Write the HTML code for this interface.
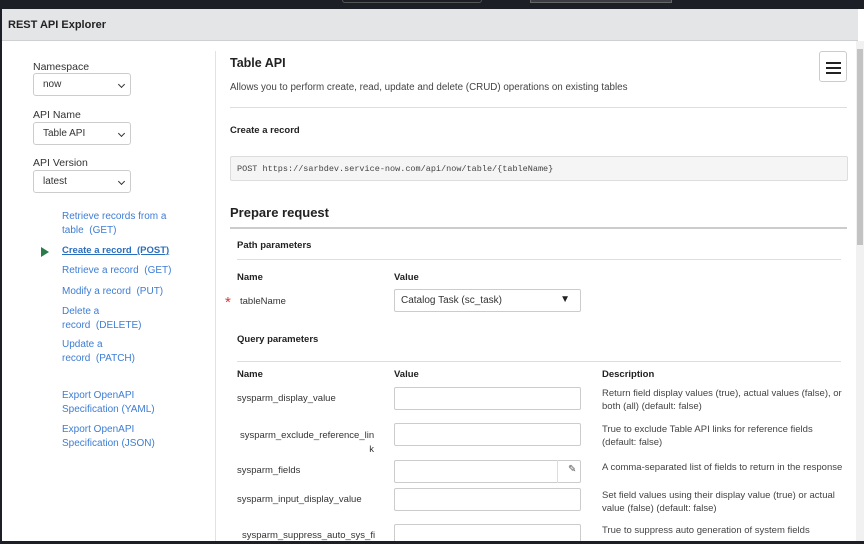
<!DOCTYPE html>
<html><head><style>
*{margin:0;padding:0;box-sizing:border-box}
body{width:864px;height:544px;overflow:hidden;background:#1c1f26;font-family:"Liberation Sans",sans-serif;position:relative;color:#333}
.a{position:absolute}
.win{left:2px;top:9px;width:862px;height:532px;background:#fff;overflow:hidden}
.hdr{left:0;top:0;width:856px;height:32px;background:#e4e5e7;border-bottom:1px solid #cfd0d2;font-size:11px;font-weight:bold;color:#222;padding:10px 0 0 6px}
.lbl{font-size:10.5px;color:#333}
.sel{width:98px;height:23px;border:1px solid #ccc;border-radius:3px;font-size:10px;padding:5px 0 0 9px;color:#333}
.sel:after{content:"";position:absolute;right:6px;top:8px;width:4px;height:4px;border-right:1.5px solid #333;border-bottom:1.5px solid #333;transform:rotate(45deg)}
.lk{font-size:10px;color:#3d7dd4;line-height:13.5px}
.b{font-weight:bold;color:#222}
.t{font-size:9.5px;color:#333}
.inp{width:187px;height:23px;border:1px solid #ccc;border-radius:2px;background:#fff}
.d{font-size:9.5px;color:#444;line-height:13px}
.hr{height:1px;background:#ddd}
</style></head><body>
<div class="a" style="left:342px;top:0;width:140px;height:3px;border:1px solid #555;border-top:none;border-radius:0 0 4px 4px"></div>
<div class="a" style="left:530px;top:0;width:142px;height:3px;background:#3a3d46;border:1px solid #666;border-top:none"></div>
<div class="a win">
<div class="a hdr">REST API Explorer</div>
<div class="a" style="left:854px;top:32px;width:8px;height:500px;background:#f1f1f1"></div>
<div class="a" style="left:855px;top:40px;width:6px;height:196px;background:#c2c2c2"></div>
<div class="a" style="left:213px;top:42px;width:1px;height:490px;background:#e2e2e2"></div>

<div class="a lbl" style="left:31px;top:52px">Namespace</div>
<div class="a sel" style="left:31px;top:64px">now</div>
<div class="a lbl" style="left:31px;top:100px">API Name</div>
<div class="a sel" style="left:31px;top:113px">Table API</div>
<div class="a lbl" style="left:31px;top:148px">API Version</div>
<div class="a sel" style="left:31px;top:161px">latest</div>

<div class="a lk" style="left:60px;top:201px">Retrieve records from a<br>table&nbsp;&nbsp;(GET)</div>
<div class="a" style="left:39px;top:238px;width:0;height:0;border-left:8px solid #2b7a4b;border-top:5px solid transparent;border-bottom:5px solid transparent"></div>
<div class="a lk" style="left:60px;top:235px;color:#2a6ebe;text-decoration:underline;font-weight:bold;font-size:9.5px">Create a record&nbsp;&nbsp;(POST)</div>
<div class="a lk" style="left:60px;top:255px">Retrieve a record&nbsp;&nbsp;(GET)</div>
<div class="a lk" style="left:60px;top:276px">Modify a record&nbsp;&nbsp;(PUT)</div>
<div class="a lk" style="left:60px;top:296px">Delete a<br>record&nbsp;&nbsp;(DELETE)</div>
<div class="a lk" style="left:60px;top:329px">Update a<br>record&nbsp;&nbsp;(PATCH)</div>
<div class="a lk" style="left:60px;top:380px">Export OpenAPI<br>Specification (YAML)</div>
<div class="a lk" style="left:60px;top:414px">Export OpenAPI<br>Specification (JSON)</div>

<div class="a b" style="left:228px;top:47px;font-size:12.5px">Table API</div>
<div class="a" style="left:228px;top:73px;font-size:9.8px;color:#444">Allows you to perform create, read, update and delete (CRUD) operations on existing tables</div>
<div class="a" style="left:817px;top:42px;width:28px;height:31px;border:1px solid #ccc;border-radius:3px;background:#fff"></div>
<div class="a" style="left:824px;top:53px;width:15px;height:2px;background:#222;box-shadow:0 5px 0 #222,0 10px 0 #222"></div>
<div class="a hr" style="left:228px;top:98px;width:617px"></div>
<div class="a b" style="left:228px;top:116px;font-size:9.5px">Create a record</div>
<div class="a" style="left:228px;top:147px;width:618px;height:25px;background:#f5f5f5;border:1px solid #ddd;border-radius:2px;font-family:'Liberation Mono',monospace;font-size:8.5px;color:#444;padding:7px 0 0 6px">POST https://sarbdev.service-now.com/api/now/table/{tableName}</div>
<div class="a b" style="left:228px;top:196px;font-size:13px">Prepare request</div>
<div class="a" style="left:228px;top:218px;width:617px;height:2px;background:#ccc"></div>
<div class="a b" style="left:235px;top:231px;font-size:9.5px">Path parameters</div>
<div class="a hr" style="left:235px;top:250px;width:604px"></div>
<div class="a b" style="left:235px;top:263px;font-size:9.5px">Name</div>
<div class="a b" style="left:392px;top:263px;font-size:9.5px">Value</div>
<div class="a" style="left:223px;top:285px;color:#d63a3a;font-size:15px">*</div>
<div class="a t" style="left:238px;top:287px">tableName</div>
<div class="a inp" style="left:392px;top:280px;width:187px;font-size:10px;padding:5px 0 0 6px;color:#333">Catalog Task (sc_task)<span style="position:absolute;right:10px;top:4px;font-size:10px;color:#222">▼</span></div>
<div class="a b" style="left:235px;top:325px;font-size:9.5px">Query parameters</div>
<div class="a hr" style="left:235px;top:352px;width:604px"></div>
<div class="a b" style="left:235px;top:360px;font-size:9.5px">Name</div>
<div class="a b" style="left:392px;top:360px;font-size:9.5px">Value</div>
<div class="a b" style="left:600px;top:360px;font-size:9.5px">Description</div>

<div class="a t" style="left:235px;top:384px">sysparm_display_value</div>
<div class="a inp" style="left:392px;top:378px"></div>
<div class="a d" style="left:600px;top:378px">Return field display values (true), actual values (false), or<br>both (all) (default: false)</div>

<div class="a t" style="left:238px;top:420px;text-align:right;line-height:14px;width:134px">sysparm_exclude_reference_lin<br>k</div>
<div class="a inp" style="left:392px;top:414px"></div>
<div class="a d" style="left:600px;top:414px">True to exclude Table API links for reference fields<br>(default: false)</div>

<div class="a t" style="left:235px;top:456px">sysparm_fields</div>
<div class="a inp" style="left:392px;top:451px"></div>
<div class="a" style="left:555px;top:451px;width:1px;height:23px;background:#ddd"></div>
<div class="a" style="left:566px;top:455px;font-size:10px;color:#555">✎</div>
<div class="a d" style="left:600px;top:452px">A comma-separated list of fields to return in the response</div>

<div class="a t" style="left:235px;top:485px">sysparm_input_display_value</div>
<div class="a inp" style="left:392px;top:479px"></div>
<div class="a d" style="left:600px;top:480px">Set field values using their display value (true) or actual<br>value (false) (default: false)</div>

<div class="a t" style="left:240px;top:521px">sysparm_suppress_auto_sys_fi</div>
<div class="a inp" style="left:392px;top:515px"></div>
<div class="a d" style="left:600px;top:515px">True to suppress auto generation of system fields</div>
</div>
</body></html>
